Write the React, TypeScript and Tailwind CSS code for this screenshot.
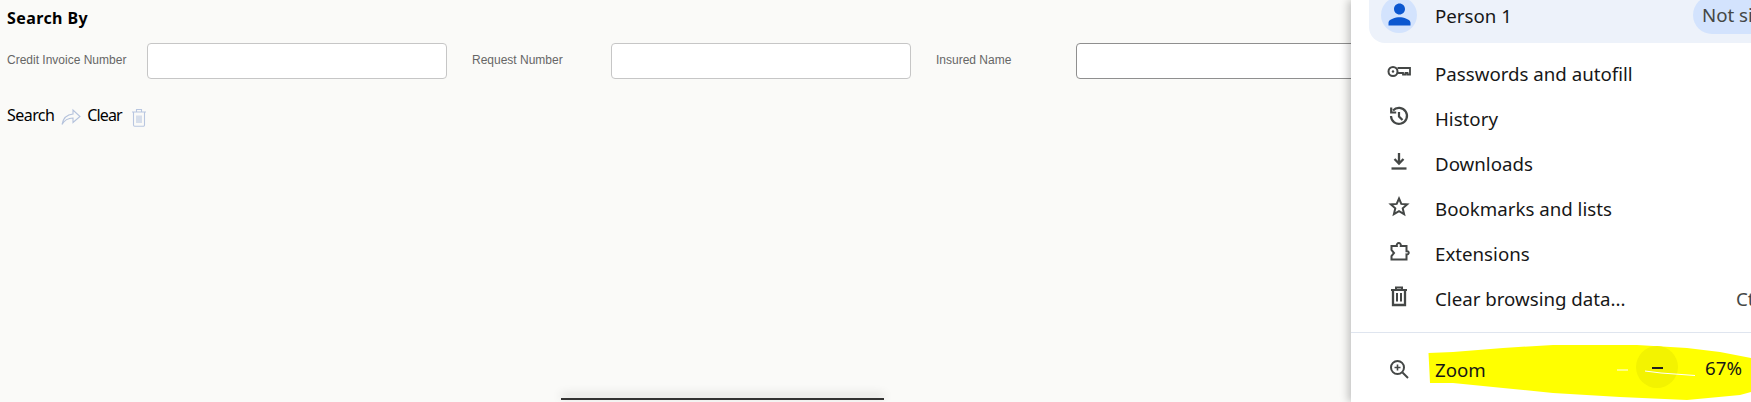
import React from "react";
import { MdPerson } from "react-icons/md";

function Label({ children }: { children: string }) {
  return <label className="pb-[2px] font-['Liberation_Sans',sans-serif] text-[12px] text-[#666666]">{children}</label>;
}

function TextBox({ dark }: { dark?: boolean }) {
  return <input className={`h-[36px] w-[300px] rounded-[4px] border bg-white ${dark ? "border-[#8f8f8f]" : "border-[#c6c6c6]"}`} />;
}

function Glyph({ children, width = 2 }: { children: React.ReactNode; width?: number }) {
  return (
    <svg width="24" height="24" viewBox="0 0 24 24" fill="none" stroke="currentColor" strokeWidth={width}>
      {children}
    </svg>
  );
}

function MenuRow({ icon, label, right }: { icon: React.ReactNode; label: string; right?: string }) {
  return (
    <div className="flex h-[45px] items-center whitespace-nowrap">
      <span className="-mt-[7px] flex w-[84px] shrink-0 pl-[36px] text-[#444746]">{icon}</span>
      <span>{label}</span>
      {right && <span className="ml-auto w-[15px] overflow-hidden text-[#444746]">{right}</span>}
    </div>
  );
}

export default function App() {
  return (
    <div className="relative h-[402px] w-[1751px] overflow-hidden bg-[#fafaf8]">
      <div className="pl-[7px] pt-[7px]">
        <h2 className="font-['Noto_Sans',sans-serif] text-[16px] font-bold leading-[22px] tracking-[0.4px] text-black">Search By</h2>
        <div className="mt-[14px] grid grid-cols-[140px_300px_25px_139px_300px_25px_140px_300px] items-center">
          <Label>Credit Invoice Number</Label>
          <TextBox />
          <span />
          <Label>Request Number</Label>
          <TextBox />
          <span />
          <Label>Insured Name</Label>
          <TextBox dark />
        </div>
        <div className="mt-[23px] flex items-center font-['Noto_Sans',sans-serif] text-[16px] leading-[22px] tracking-[-0.55px] text-black">
          <span>Search</span>
          <svg className="ml-[7px] mt-[4px]" width="20" height="18" viewBox="0 0 20 18" fill="none" stroke="#b4c2dc" strokeWidth="1.1">
            <path d="M1 16.5C2 10.5 6 6.5 12 6V2l7 6.5-7 6v-4.5C7 10 3.5 12 1 16.5Z" />
          </svg>
          <span className="ml-[6px] tracking-[-0.9px]">Clear</span>
          <svg className="ml-[9px] mt-[6px]" width="16" height="19" viewBox="0 0 16 19" fill="none" stroke="#b8c6e0" strokeWidth="1.1">
            <path d="M1 4h14M5.5 4V1.5h5V4M2.5 4v13a1.2 1.2 0 0 0 1.2 1.2h8.6a1.2 1.2 0 0 0 1.2-1.2V4" />
            <path d="M6 7.5v7.5M8 7.5v7.5M10 7.5v7.5" />
          </svg>
        </div>
      </div>

      {/* bottom bar peeking at the window edge */}
      <div className="absolute bottom-[2px] left-[561px] h-[2px] w-[323px] bg-[#333333] shadow-[0_-3px_10px_rgba(0,0,0,0.3)]" />

      {/* browser menu */}
      <div className="absolute bottom-0 right-0 top-0 flex w-[400px] flex-col bg-white font-['Noto_Sans',sans-serif] text-[18.7px] text-[#171717] shadow-[-3px_0_8px_rgba(0,0,0,0.22)]">
        <div className="relative ml-[18px] flex h-[43px] items-center rounded-bl-[16px] bg-[#edf2fa] pl-[12px]">
          <span className="-mt-[14px] flex h-[36px] w-[36px] shrink-0 items-center justify-center rounded-full bg-[#d3e3fd] text-[#0b57d0]">
            <MdPerson size={33} />
          </span>
          <span className="-mt-[11px] ml-[18px]">Person 1</span>
          <span className="absolute -top-[4px] left-[324px] flex h-[38px] w-[80px] items-center whitespace-nowrap rounded-l-full bg-[#d3e3fd] pl-[9px] text-[#444746]">Not signed in</span>
        </div>
        <div className="mt-[9px]">
          <MenuRow
            label="Passwords and autofill"
            icon={
              <Glyph>
                <circle cx="6" cy="12.5" r="4.5" />
                <circle cx="6" cy="12.5" r="1.2" fill="currentColor" stroke="none" />
                <path d="M10.5 9h12.5v6.5h-2.5V14h-2v1.5H16V14h-5.5" strokeWidth="1.8" />
              </Glyph>
            }
          />
          <MenuRow
            label="History"
            icon={
              <Glyph width={2.2}>
                <path d="M6 6.6A8 8 0 1 1 4 12" />
                <path d="M4.2 3.5v5h5" />
                <path d="M12 8v4.5l3.5 3.5" />
              </Glyph>
            }
          />
          <MenuRow
            label="Downloads"
            icon={
              <Glyph width={2.3}>
                <path d="M12 4v10" />
                <path d="M7.5 10 12 14.5 16.5 10" />
                <path d="M4.5 19.5h15" />
              </Glyph>
            }
          />
          <MenuRow
            label="Bookmarks and lists"
            icon={
              <Glyph>
                <path d="M12 4.500l2.300 5.400 5.900.5-4.500 3.900 1.400 5.800L12 17.100l-5.100 3 1.400-5.800-4.500-3.900 5.900-.5Z" />
              </Glyph>
            }
          />
          <MenuRow
            label="Extensions"
            icon={
              <Glyph>
                <path d="M4.5 7h5.3c-.6-4 4.6-4 4 0h5.7v5.2c3-.4 3 3.600 0 3.200V20.500h-15v-3.500l2.500-3-2.500-3Z" />
              </Glyph>
            }
          />
          <MenuRow
            label="Clear browsing data..."
            right="Ctrl"
            icon={
              <Glyph>
                <path d="M4 6h16M9 6V3.500h6V6" />
                <path d="M6 6v15h12V6" strokeWidth="2.300" />
                <path d="M10 9v8.500M14 9v8.500" />
              </Glyph>
            }
          />
        </div>
        <div className="mt-[10px] h-px bg-[#dfe5ef]" />
        <div className="relative mt-[15px] flex h-[45px] items-center">
          <svg className="absolute -top-[13px] left-[77px]" width="323" height="67" viewBox="0 0 323 67">
            <path d="M0.500 18 25 17 75 13 125 10H209L259 13 292 17 323 23V57L312 60 259 65 192 62 125 58 75 53 25 48H2Z" fill="#ffff00" />
            <circle cx="229" cy="32" r="21" fill="#f3f300" />
            <path d="M189 35h11M217 36l16 2 34 2.500" stroke="#ffffff" strokeWidth="1" fill="none" />
          </svg>
          <span className="relative -mt-[4px] flex w-[84px] shrink-0 pl-[36px] text-[#444746]">
            <Glyph>
              <circle cx="10.500" cy="10.500" r="6.500" />
              <path d="M15.500 15.500 21 21" />
              <path d="M10.500 7.500v6M7.500 10.500h6" strokeWidth="1.600" />
            </Glyph>
          </span>
          <span className="relative">Zoom</span>
          <span className="absolute left-[301px] top-[19px] h-[2px] w-[11px] bg-[#1f1f1f]" />
          <span className="absolute left-[354px] top-[6px]">67%</span>
        </div>
      </div>
    </div>
  );
}
